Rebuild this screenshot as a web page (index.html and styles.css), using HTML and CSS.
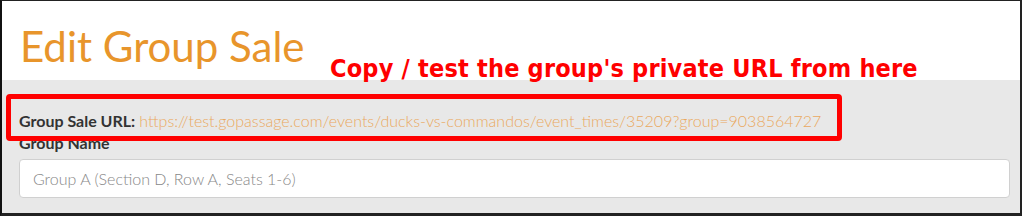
FILE: index.html
```html
<!DOCTYPE html>
<html lang="en">
<head>
<meta charset="UTF-8">
<meta name="viewport" content="width=device-width, initial-scale=1.0">
<title>Edit Group Sale</title>
<link rel="stylesheet" href="styles.css">
</head>
<body>
  <div class="frame">
    <div class="page-header">
      <h1>Edit Group Sale</h1>
    </div>

    <div class="panel">
      <div class="url-line">
        <strong>Group Sale URL:</strong>
        <a href="#">https://test.gopassage.com/events/ducks-vs-commandos/event_times/35209?group=9038564727</a>
      </div>
      <label for="groupName">Group Name</label>
      <input type="text" id="groupName" placeholder="Group A (Section D, Row A, Seats 1-6)">
    </div>

    <!-- Annotation drawn over the screenshot -->
    <div class="note">Copy / test the group's private URL from here</div>
    <div class="note-box"></div>
  </div>
</body>
</html>
```

FILE: styles.css
```css
/* Edit group sale page with annotation */
body {
  margin: 0;
  padding: 0;
  background-color: #fff;
  font-family: Lato, "Open Sans", sans-serif;
}

.frame {
  position: relative;
  width: 1018px;
  height: 212px;
  border-top: 1px solid #222;
  border-left: 2px solid #111;
  border-right: 2px solid #222;
  border-bottom: 3px solid #222;
  display: flex;
  flex-direction: column;
  overflow: hidden;
}

.page-header {
  height: 79px;
  background-color: #fff;
}

.page-header h1 {
  margin: 0;
  padding: 20px 0 0 18px;
  font-size: 42px;
  font-weight: 400;
  line-height: 50px;
  color: #e8952b;
}

.panel {
  flex: 1;
  background-color: #e8e8e8;
  padding: 30px 10px 0 17px;
  display: flex;
  flex-direction: column;
}

.url-line {
  font-size: 16px;
  line-height: 22px;
  color: #333;
}

.url-line strong {
  font-weight: 700;
}

.url-line a {
  color: #eaa960;
  font-weight: 300;
  text-decoration: none;
}

.panel label {
  font-size: 16px;
  line-height: 22px;
  color: #333;
  font-weight: 700;
  margin-bottom: 5px;
}

.panel input {
  height: 39px;
  box-sizing: border-box;
  border: 1px solid #d0d0d0;
  border-radius: 4px;
  padding: 0 13px;
  font-family: Lato, sans-serif;
  font-size: 16px;
  font-weight: 300;
  background-color: #fff;
}

.panel input::placeholder {
  color: #888;
}

.note {
  position: absolute;
  left: 328px;
  top: 54px;
  font-family: "DejaVu Sans Condensed", "DejaVu Sans", sans-serif;
  font-weight: 700;
  font-size: 25px;
  letter-spacing: 0.2px;
  line-height: 28px;
  color: #f00;
}

.note-box {
  position: absolute;
  left: 4px;
  top: 93px;
  width: 826px;
  height: 37px;
  border: 5px solid #f00;
  border-radius: 4px;
}
```
